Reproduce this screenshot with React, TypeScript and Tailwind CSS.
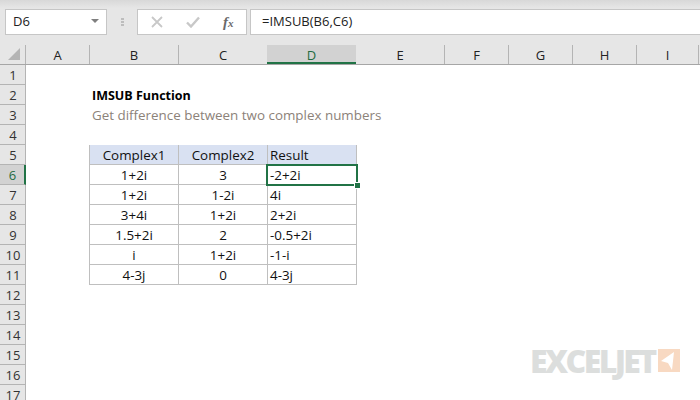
import React from "react";

const font = { fontFamily: '"Open Sans", "Noto Sans", sans-serif' };
const cols: [string, string][] = [
  ["A", "w-[64px]"],
  ["B", "w-[89px]"],
  ["C", "w-[89px]"],
  ["D", "w-[89px]"],
  ["E", "w-[89px]"],
  ["F", "w-[64px]"],
  ["G", "w-[64px]"],
  ["H", "w-[64px]"],
  ["I", "w-[62px]"],
];
const table = [
  ["1+2i", "3", "-2+2i"],
  ["1+2i", "1-2i", "4i"],
  ["3+4i", "1+2i", "2+2i"],
  ["1.5+2i", "2", "-0.5+2i"],
  ["i", "1+2i", "-1-i"],
  ["4-3j", "0", "4-3j"],
];
const rows = Array.from({ length: 17 }, (_, i) => i + 1);

function TableRow({ cells, header }: { cells: string[]; header?: boolean }) {
  const bg = header ? "bg-[#d9e1f2]" : "bg-white";
  return (
    <div className="flex h-5 pl-[63px] text-[13.4px] text-[#111]">
      <div className={`w-[90px] h-5 ${bg} border-b border-l border-r border-[#bfbfbf] text-center leading-[21px]`}>{cells[0]}</div>
      <div className={`w-[89px] h-5 ${bg} border-b border-r border-[#bfbfbf] text-center leading-[21px]`}>{cells[1]}</div>
      <div className={`w-[89px] h-5 ${bg} border-b border-r border-[#bfbfbf] pl-[2px] leading-[21px]`}>{cells[2]}</div>
    </div>
  );
}

export default function App() {
  return (
    <div className="relative w-[700px] h-[400px] overflow-hidden bg-white text-[13px] text-[#1f1f1f]" style={font}>
      {/* Ribbon strip and formula bar */}
      <div className="h-[45px] bg-[#e6e6e6] bg-gradient-to-b from-[#d8d8d8] to-[#e6e6e6] bg-[length:100%_8px] bg-no-repeat pt-[9px]">
        <div className="flex h-[26px] items-stretch">
          <div className="ml-[5px] w-[102px] border border-[#c6c6c6] bg-white flex items-center justify-between pl-[7px] pr-[7px] text-[#222]">
            <span>D6</span>
            <span className="w-0 h-0 mb-[3px] border-l-[4px] border-r-[4px] border-t-[4px] border-l-transparent border-r-transparent border-t-[#7f7f7f]" />
          </div>
          <div className="w-[30px] flex flex-col items-center justify-center gap-[1px]">
            <span className="w-[3px] h-[2px] bg-[#bdbdbd]" />
            <span className="w-[3px] h-[2px] bg-[#bdbdbd]" />
            <span className="w-[3px] h-[2px] bg-[#bdbdbd]" />
          </div>
          <div className="w-[110px] border border-[#c6c6c6] bg-white flex items-center pl-[13px]">
            <svg width="12" height="12" viewBox="0 0 12 12" className="mr-[23px]">
              <path d="M1 1 L11 11 M11 1 L1 11" stroke="#c8c8c8" strokeWidth="1.8" fill="none" />
            </svg>
            <svg width="14" height="12" viewBox="0 0 14 12" className="mr-[23px]">
              <path d="M1 6.5 L5 10.5 L13 1.5" stroke="#c8c8c8" strokeWidth="2.4" fill="none" />
            </svg>
            <span className="italic text-[#6a6a6a] text-[15px] leading-none font-semibold" style={{ fontFamily: '"Liberation Serif", serif' }}>
              f<span className="text-[11px]">x</span>
            </span>
          </div>
          <div className="ml-[3px] flex-1 border-t border-b border-l border-[#c6c6c6] bg-white flex items-center pl-[11px] text-[#222]">
            =IMSUB(B6,C6)
          </div>
        </div>
      </div>

      {/* Column headers */}
      <div className="flex h-5 bg-[#e6e6e6] border-b border-[#a6a6a6]">
        <div className="w-[26px] h-[19px] border-r border-[#b4b4b4] relative overflow-hidden">
          <svg width="14" height="14" viewBox="0 0 14 14" className="absolute right-[3px] bottom-[2px]">
            <path d="M12 0 V12 H0 Z" fill="#b4b4b4" />
          </svg>
        </div>
        {cols.map(([c, w]) => (
          <div
            key={c}
            className={`${w} h-[19px] text-center leading-[21px] ${
              c === "D" ? "ml-[-1px] bg-[#d2d2d2] border-b-2 border-[#217346] text-[#1f6b41]" : "border-r border-[#b4b4b4] text-[#222]"
            }`}
          >
            {c}
          </div>
        ))}
      </div>

      {/* Sheet body */}
      <div className="flex">
        <div className="w-[26px] shrink-0 bg-[#e6e6e6] border-r border-[#b4b4b4]">
          {rows.map((r) => (
            <div
              key={r}
              className={`h-5 pl-[1px] text-center leading-[21px] border-b border-[#b4b4b4] ${
                r === 6 ? "bg-[#d2d2d2] text-[#1f6b41] border-r-2 border-r-[#217346] mr-[-1px]" : "text-[#333]"
              }`}
            >
              {r}
            </div>
          ))}
        </div>
        <div className="relative flex-1">
          <div className="h-5" />
          <div className="h-5 pl-[66px] font-bold text-[12.5px] leading-[21px] text-black">IMSUB Function</div>
          <div className="h-5 pl-[66px] text-[13.4px] leading-[20px] text-[#8c8279]">Get difference between two complex numbers</div>
          <div className="h-5" />
          <TableRow cells={["Complex1", "Complex2", "Result"]} header />
          {table.map((t, i) => (
            <TableRow key={i} cells={t} />
          ))}
          {/* Active cell selection */}
          <div className="absolute left-[240px] top-[99px] w-[92px] h-[22px] border-2 border-[#217346]" />
          <div className="absolute left-[328px] top-[117px] w-[5px] h-[5px] bg-[#217346] border border-white box-content" />
        </div>
      </div>

      {/* Watermark */}
      <div className="absolute left-[530px] top-[344px] flex items-start gap-[3px]">
        <span
          className="text-[32px] leading-[34px] font-extrabold tracking-[-2.6px] text-[#dcdedd]"
          style={{ fontFamily: '"Open Sans", sans-serif' }}
        >
          EXCELJET
        </span>
        <svg width="22" height="23" viewBox="0 0 22 23" className="mt-[5px]">
          <rect width="22" height="23" fill="#f8d9c2" />
          <path d="M3 12 L16 3 L14 21 L10 14 Z" fill="#ffffff" />
        </svg>
      </div>
    </div>
  );
}
